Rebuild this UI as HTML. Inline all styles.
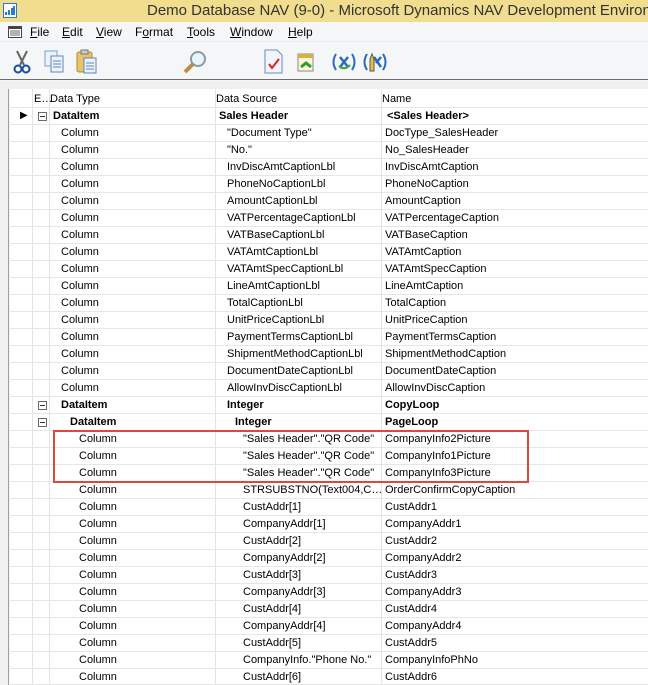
<!DOCTYPE html>
<html><head><meta charset="utf-8"><style>
*{margin:0;padding:0;box-sizing:border-box}
body{width:648px;height:685px;overflow:hidden;background:#f5f6f7;font-family:"Liberation Sans",sans-serif;font-size:11px;color:#000;position:relative}
#title{position:absolute;left:0;top:0;width:648px;height:22px;background:#f1dd8e;font-size:15px;color:#333;line-height:22px;padding-left:147px;white-space:nowrap;overflow:hidden}
#menu{position:absolute;top:22px;left:0;width:648px;height:20px;border-bottom:1px solid #e8e9ea;font-size:12px;line-height:20px}
#menu span{position:absolute;top:0}
#tb{position:absolute;top:42px;left:0;width:648px;height:38px;border-bottom:1px solid #6d6d6d}
#band{position:absolute;top:81px;left:0;width:648px;height:8px;background:#f0f0f0}
#left{position:absolute;top:89px;left:0;width:9px;height:596px;background:#f0f0f0;border-right:1px solid #a0a0a0}
#grid{position:absolute;top:89px;left:10px;width:638px;height:596px;background:#fff}
.r{position:absolute;left:10px;width:638px;height:17px;border-bottom:1px solid #e6e6e6;line-height:16px;white-space:nowrap;overflow:hidden}
.r span{position:absolute;top:0}
.vl{position:absolute;top:89px;width:1px;height:596px;background:#e3e3e3}
.b{font-weight:bold}
.ex{position:absolute;width:9px;height:9px;border:1px solid #6a6a6a;background:#fff;top:4px;left:28px}
.ex:after{content:"";position:absolute;left:1px;top:3px;width:5px;height:1px;background:#333}
</style></head><body>
<div id="title">Demo Database NAV (9-0) - Microsoft Dynamics NAV Development Environment</div>
<svg style="position:absolute;left:3px;top:2px" width="14" height="17"><rect x="0.5" y="1.5" width="13" height="14" fill="#fff" stroke="#2a7bd0"/><path d="M3 13 V10 M6 13 V8 M9 13 V6 M11 13 V4" stroke="#2a7bd0" stroke-width="2"/></svg>
<div id="menu">
<svg style="position:absolute;left:8px;top:4px" width="14" height="12"><rect x="0.5" y="0.5" width="13" height="11" fill="#fff" stroke="#444"/><rect x="1" y="1" width="12" height="2" fill="#444"/><path d="M2 5H12M2 7H12M2 9H12" stroke="#666"/></svg>
<span style="left:30px"><u>F</u>ile</span><span style="left:62px"><u>E</u>dit</span><span style="left:96px"><u>V</u>iew</span><span style="left:135px">F<u>o</u>rmat</span><span style="left:187px"><u>T</u>ools</span><span style="left:230px"><u>W</u>indow</span><span style="left:288px"><u>H</u>elp</span>
</div>
<div id="tb">
<svg style="position:absolute;left:12px;top:8px" width="20" height="24"><path d="M5 1 L12 15 M15 1 L8 15" stroke="#666" stroke-width="2"/><circle cx="6" cy="19" r="3.5" fill="none" stroke="#1a4fa0" stroke-width="2"/><circle cx="14" cy="19" r="3.5" fill="none" stroke="#1a4fa0" stroke-width="2"/></svg>
<svg style="position:absolute;left:44px;top:8px" width="22" height="24"><rect x="1" y="1" width="12" height="15" fill="#eef3fb" stroke="#7a9ccc"/><rect x="7" y="6" width="12" height="16" fill="#eef3fb" stroke="#5a84c0"/><path d="M9 11H17M9 14H17M9 17H17" stroke="#5a84c0"/></svg>
<svg style="position:absolute;left:76px;top:7px" width="22" height="26"><rect x="1" y="3" width="15" height="20" rx="2" fill="#e9c46a" stroke="#b08a30"/><rect x="5" y="1" width="7" height="4" fill="#ccc" stroke="#777"/><rect x="8" y="9" width="12" height="15" fill="#eef3fb" stroke="#5a84c0"/><path d="M10 14H18M10 17H18M10 20H18" stroke="#5a84c0"/></svg>
<svg style="position:absolute;left:182px;top:8px" width="26" height="24"><circle cx="16" cy="9" r="7" fill="#e8f3fb" stroke="#8a9aa8" stroke-width="2"/><path d="M11 14 L3 22" stroke="#c08a40" stroke-width="4"/></svg>
<svg style="position:absolute;left:264px;top:7px" width="20" height="26"><path d="M1 1H13L18 6V24H1Z" fill="#f2f6fc" stroke="#6a8cc0"/><path d="M5 15L8 19L15 10" stroke="#e02020" stroke-width="2" fill="none"/></svg>
<svg style="position:absolute;left:297px;top:11px" width="18" height="20"><rect x="1" y="1" width="15" height="17" fill="#fff7d0" stroke="#888"/><rect x="1" y="1" width="15" height="4" fill="#d8b040"/><path d="M4 14 L9 10 L14 14" stroke="#2a9a3a" stroke-width="3" fill="none"/></svg>
<svg style="position:absolute;left:331px;top:9px" width="26" height="22"><path d="M5 3Q0 11 5 19M21 3Q26 11 21 19" stroke="#2a6ac0" stroke-width="2" fill="none"/><path d="M9 6L17 16M17 6L9 16" stroke="#2a6ac0" stroke-width="2.5"/><path d="M8 15Q13 20 19 14" stroke="#3aa040" stroke-width="2" fill="none"/></svg>
<svg style="position:absolute;left:362px;top:9px" width="26" height="22"><path d="M5 3Q0 11 5 19M21 3Q26 11 21 19" stroke="#2a6ac0" stroke-width="2" fill="none"/><path d="M12 6L19 16M19 6L14 12" stroke="#2a6ac0" stroke-width="2.5"/><path d="M8 20V8L10 3L12 8V20Z" fill="#e8c040" stroke="#555"/></svg>
</div>
<div id="band"></div>
<div id="left"></div>
<div id="grid"></div>
<div class="vl" style="left:32px"></div>
<div class="vl" style="left:49px"></div>
<div class="vl" style="left:215px"></div>
<div class="vl" style="left:381px"></div>
<div class="r" style="top:91px"><span style="left:24px">E…</span><span style="left:40px">Data Type</span><span style="left:206px">Data Source</span><span style="left:372px">Name</span></div>
<div class="r" style="top:108px"><span style="left:10px;font-size:10px">&#9654;</span><div class="ex"></div><span class="b" style="left:43px">DataItem</span><span class="b" style="left:209px">Sales Header</span><span class="b" style="left:377px">&lt;Sales Header&gt;</span></div>
<div class="r" style="top:125px"><span style="left:51px">Column</span><span style="left:217px">"Document Type"</span><span style="left:375px">DocType_SalesHeader</span></div>
<div class="r" style="top:142px"><span style="left:51px">Column</span><span style="left:217px">"No."</span><span style="left:375px">No_SalesHeader</span></div>
<div class="r" style="top:159px"><span style="left:51px">Column</span><span style="left:217px">InvDiscAmtCaptionLbl</span><span style="left:375px">InvDiscAmtCaption</span></div>
<div class="r" style="top:176px"><span style="left:51px">Column</span><span style="left:217px">PhoneNoCaptionLbl</span><span style="left:375px">PhoneNoCaption</span></div>
<div class="r" style="top:193px"><span style="left:51px">Column</span><span style="left:217px">AmountCaptionLbl</span><span style="left:375px">AmountCaption</span></div>
<div class="r" style="top:210px"><span style="left:51px">Column</span><span style="left:217px">VATPercentageCaptionLbl</span><span style="left:375px">VATPercentageCaption</span></div>
<div class="r" style="top:227px"><span style="left:51px">Column</span><span style="left:217px">VATBaseCaptionLbl</span><span style="left:375px">VATBaseCaption</span></div>
<div class="r" style="top:244px"><span style="left:51px">Column</span><span style="left:217px">VATAmtCaptionLbl</span><span style="left:375px">VATAmtCaption</span></div>
<div class="r" style="top:261px"><span style="left:51px">Column</span><span style="left:217px">VATAmtSpecCaptionLbl</span><span style="left:375px">VATAmtSpecCaption</span></div>
<div class="r" style="top:278px"><span style="left:51px">Column</span><span style="left:217px">LineAmtCaptionLbl</span><span style="left:375px">LineAmtCaption</span></div>
<div class="r" style="top:295px"><span style="left:51px">Column</span><span style="left:217px">TotalCaptionLbl</span><span style="left:375px">TotalCaption</span></div>
<div class="r" style="top:312px"><span style="left:51px">Column</span><span style="left:217px">UnitPriceCaptionLbl</span><span style="left:375px">UnitPriceCaption</span></div>
<div class="r" style="top:329px"><span style="left:51px">Column</span><span style="left:217px">PaymentTermsCaptionLbl</span><span style="left:375px">PaymentTermsCaption</span></div>
<div class="r" style="top:346px"><span style="left:51px">Column</span><span style="left:217px">ShipmentMethodCaptionLbl</span><span style="left:375px">ShipmentMethodCaption</span></div>
<div class="r" style="top:363px"><span style="left:51px">Column</span><span style="left:217px">DocumentDateCaptionLbl</span><span style="left:375px">DocumentDateCaption</span></div>
<div class="r" style="top:380px"><span style="left:51px">Column</span><span style="left:217px">AllowInvDiscCaptionLbl</span><span style="left:375px">AllowInvDiscCaption</span></div>
<div class="r" style="top:397px"><div class="ex"></div><span class="b" style="left:51px">DataItem</span><span class="b" style="left:217px">Integer</span><span class="b" style="left:375px">CopyLoop</span></div>
<div class="r" style="top:414px"><div class="ex"></div><span class="b" style="left:60px">DataItem</span><span class="b" style="left:225px">Integer</span><span class="b" style="left:375px">PageLoop</span></div>
<div class="r" style="top:431px"><span style="left:69px">Column</span><span style="left:233px">"Sales Header"."QR Code"</span><span style="left:375px">CompanyInfo2Picture</span></div>
<div class="r" style="top:448px"><span style="left:69px">Column</span><span style="left:233px">"Sales Header"."QR Code"</span><span style="left:375px">CompanyInfo1Picture</span></div>
<div class="r" style="top:465px"><span style="left:69px">Column</span><span style="left:233px">"Sales Header"."QR Code"</span><span style="left:375px">CompanyInfo3Picture</span></div>
<div class="r" style="top:482px"><span style="left:69px">Column</span><span style="left:233px">STRSUBSTNO(Text004,C…</span><span style="left:375px">OrderConfirmCopyCaption</span></div>
<div class="r" style="top:499px"><span style="left:69px">Column</span><span style="left:233px">CustAddr[1]</span><span style="left:375px">CustAddr1</span></div>
<div class="r" style="top:516px"><span style="left:69px">Column</span><span style="left:233px">CompanyAddr[1]</span><span style="left:375px">CompanyAddr1</span></div>
<div class="r" style="top:533px"><span style="left:69px">Column</span><span style="left:233px">CustAddr[2]</span><span style="left:375px">CustAddr2</span></div>
<div class="r" style="top:550px"><span style="left:69px">Column</span><span style="left:233px">CompanyAddr[2]</span><span style="left:375px">CompanyAddr2</span></div>
<div class="r" style="top:567px"><span style="left:69px">Column</span><span style="left:233px">CustAddr[3]</span><span style="left:375px">CustAddr3</span></div>
<div class="r" style="top:584px"><span style="left:69px">Column</span><span style="left:233px">CompanyAddr[3]</span><span style="left:375px">CompanyAddr3</span></div>
<div class="r" style="top:601px"><span style="left:69px">Column</span><span style="left:233px">CustAddr[4]</span><span style="left:375px">CustAddr4</span></div>
<div class="r" style="top:618px"><span style="left:69px">Column</span><span style="left:233px">CompanyAddr[4]</span><span style="left:375px">CompanyAddr4</span></div>
<div class="r" style="top:635px"><span style="left:69px">Column</span><span style="left:233px">CustAddr[5]</span><span style="left:375px">CustAddr5</span></div>
<div class="r" style="top:652px"><span style="left:69px">Column</span><span style="left:233px">CompanyInfo."Phone No."</span><span style="left:375px">CompanyInfoPhNo</span></div>
<div class="r" style="top:669px;height:16px"><span style="left:69px">Column</span><span style="left:233px">CustAddr[6]</span><span style="left:375px">CustAddr6</span></div>
<div style="position:absolute;left:53px;top:430px;width:476px;height:53px;border:2px solid #e0463e"></div>
</body></html>
